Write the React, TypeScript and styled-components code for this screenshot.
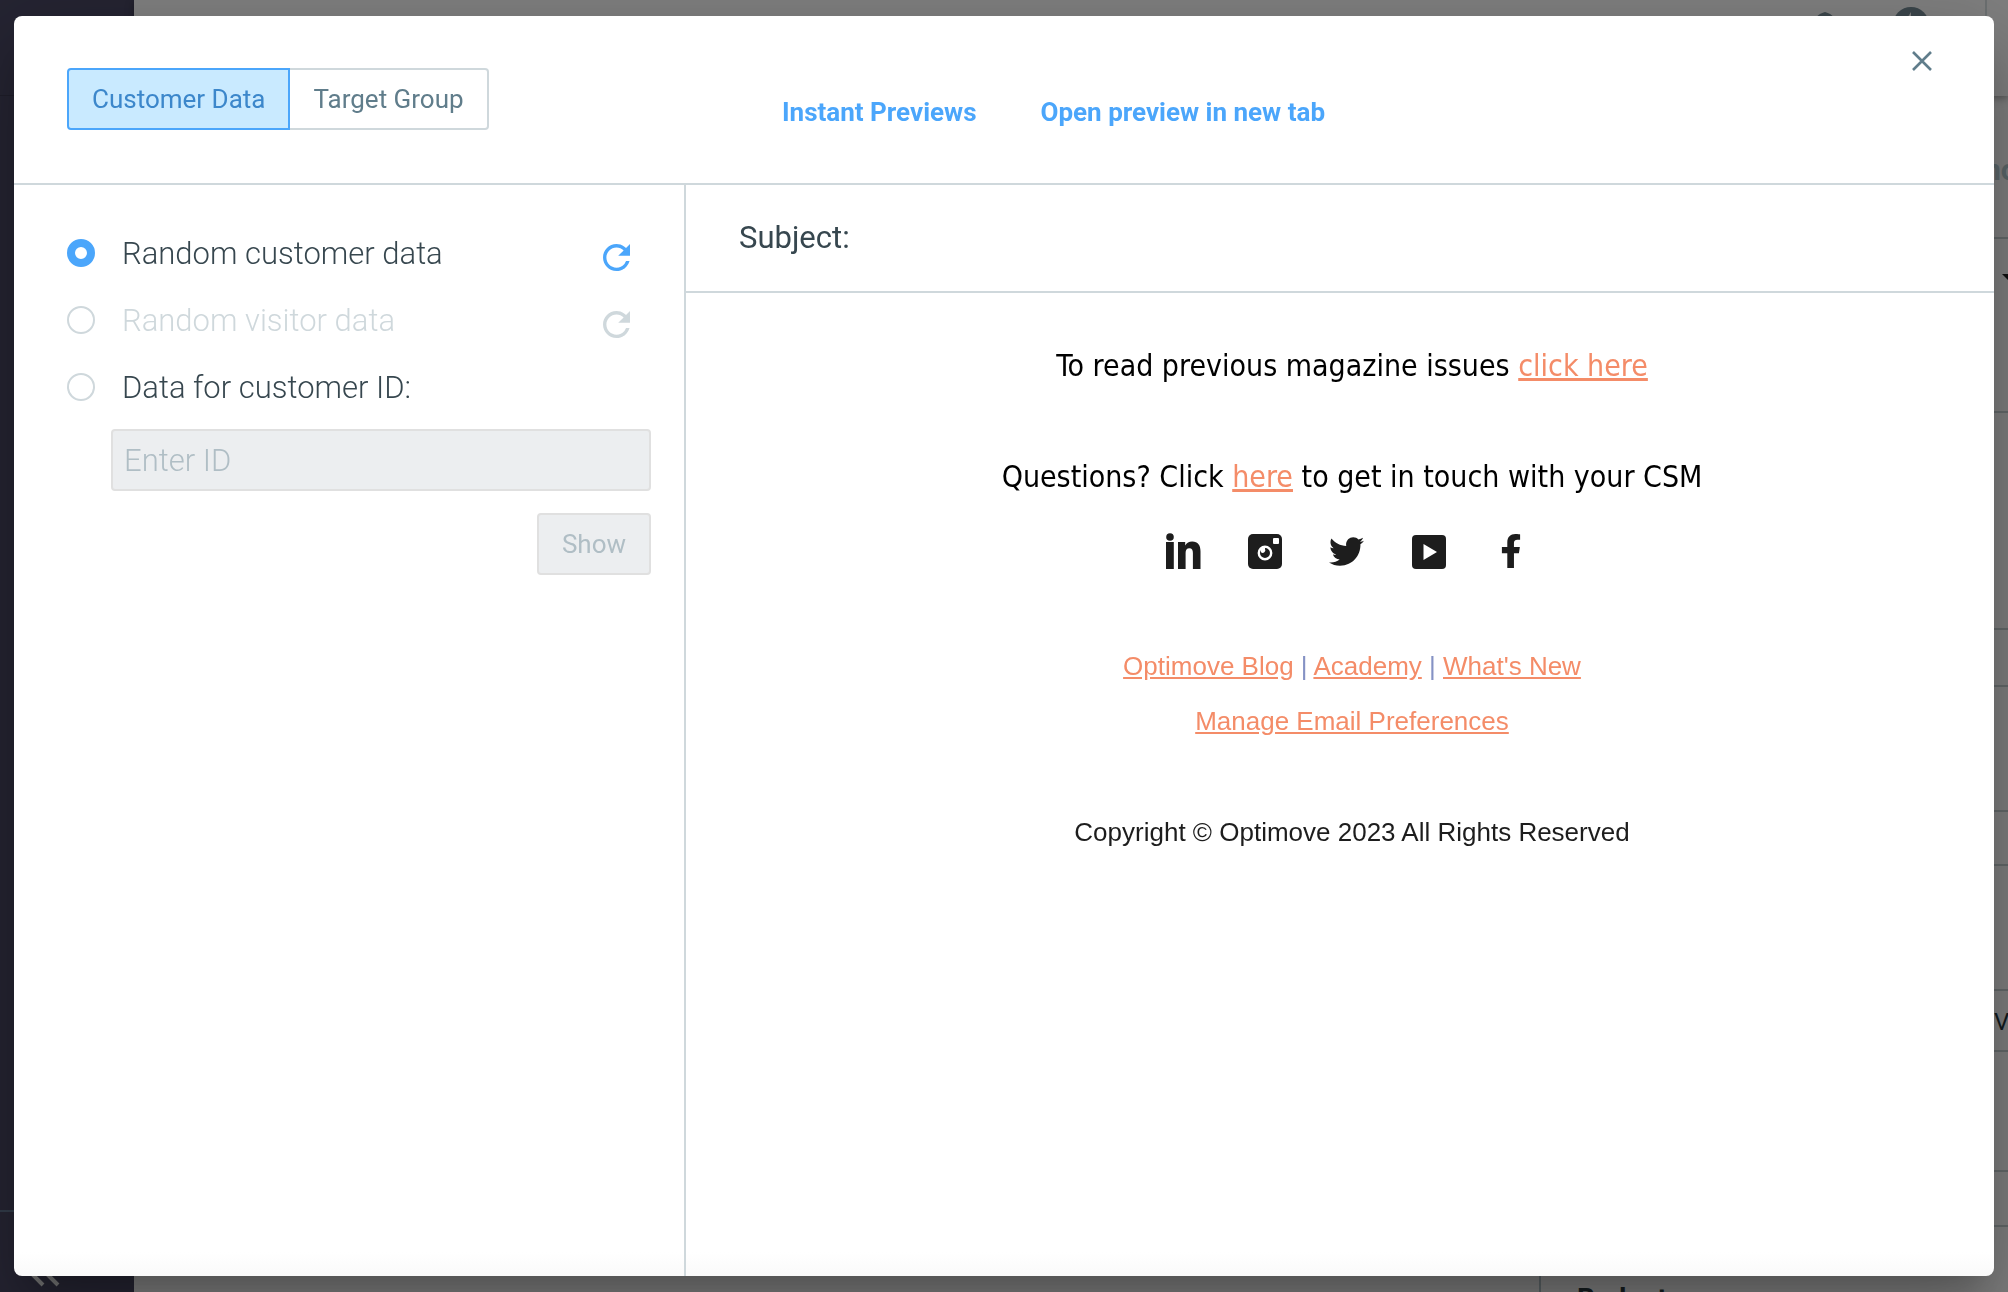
import React, { useState } from "react";
import styled, { createGlobalStyle } from "styled-components";
import { FaTwitter, FaFacebookF } from "react-icons/fa";

const GlobalStyle = createGlobalStyle`
  *, *::before, *::after { box-sizing: border-box; }
  body { margin: 0; font-family: Roboto, "Liberation Sans", sans-serif; color: #37474f; }
  button, input { font-family: inherit; }
`;

const line = "#cfd8dc";
const blue = "#4ba6fb";
const coral = "#f48c68";

/* Dimmed application behind the dialog */

const Backdrop = styled.div`
  display: flex;
  height: 100vh;
  overflow: hidden;
  background: #7f7f7f;
`;

const AppNav = styled.nav`
  flex: none;
  width: 134px;
  display: flex;
  flex-direction: column;
  background: #252432;
`;

const NavBrand = styled.div`
  height: 96px;
  border-bottom: 1px solid #1f1e2a;
`;

const NavFooter = styled.div`
  height: 82px;
  margin-top: auto;
  padding: 52px 0 0 30px;
  border-top: 2px solid #323c4a;
`;

const AppMain = styled.div`
  flex: 1;
  min-width: 0;
  display: flex;
  flex-direction: column;
`;

const TopBar = styled.div`
  flex: none;
  height: 96px;
  display: flex;
  justify-content: flex-end;
  align-items: flex-start;
  box-shadow: 0 2px 8px rgba(0, 0, 0, 0.35);
`;

const TopIcons = styled.div`
  display: flex;
  gap: 50px;
  padding: 7px 56px 0 0;
`;

const TopEdge = styled.div`
  width: 23px;
  height: 100%;
  border-left: 2px solid #6c7071;
`;

const SettingsPanel = styled.aside`
  align-self: flex-end;
  width: 469px;
  border-left: 2px solid #5b6366;
`;

const SettingsRow = styled.div<{ $height: number }>`
  height: ${(p) => p.$height}px;
  display: flex;
  align-items: center;
  justify-content: flex-end;
  border-bottom: 2px solid #64696a;
`;

const RowTitle = styled.div`
  width: 24px;
  padding-top: 6px;
  font-size: 30px;
  font-weight: 700;
  color: #5b6669;
`;

const RowValue = styled.div`
  width: 14px;
  padding-top: 2px;
  font-size: 24px;
  color: #111a1e;
`;

const SectionTitle = styled.div`
  padding: 56px 0 0 36px;
  font-size: 28px;
  line-height: 32px;
  font-weight: 700;
  color: #151d20;
`;

/* Dialog */

const Overlay = styled.div`
  position: fixed;
  inset: 0;
  display: flex;
  padding: 16px 14px;
`;

const Dialog = styled.section`
  flex: 1;
  display: flex;
  flex-direction: column;
  border-radius: 8px;
  overflow: hidden;
  background: linear-gradient(to top, #fafafa 0, #ffffff 24px);
  box-shadow: 0 22px 30px -14px rgba(0, 0, 0, 0.2),
    0 48px 76px 6px rgba(0, 0, 0, 0.14), 0 18px 92px 16px rgba(0, 0, 0, 0.12);
`;

const Header = styled.header`
  display: flex;
  align-items: flex-start;
  height: 169px;
  border-bottom: 2px solid ${line};
`;

const Tabs = styled.div`
  flex: none;
  width: 672px;
  display: flex;
  padding: 52px 0 0 53px;
`;

const Tab = styled.button<{ $active?: boolean }>`
  height: 62px;
  padding: 0 23px;
  font-size: 26px;
  color: ${(p) => (p.$active ? "#3c87cb" : "#607d8b")};
  background: ${(p) => (p.$active ? "#c9eaff" : "#ffffff")};
  border: 2px solid ${(p) => (p.$active ? blue : line)};

  &:first-child {
    border-radius: 4px 0 0 4px;
    ${(p) => !p.$active && "border-right: 0;"}
  }
  &:last-child {
    border-radius: 0 4px 4px 0;
    ${(p) => !p.$active && "border-left: 0;"}
  }
`;

const HeaderLinks = styled.nav`
  flex: 1;
  display: flex;
  gap: 64px;
  padding: 80px 0 0 96px;
`;

const HeaderLink = styled.a`
  font-size: 26px;
  line-height: 32px;
  font-weight: 700;
  color: ${blue};
  text-decoration: none;
`;

const CloseButton = styled.button`
  display: flex;
  margin: 27px 54px 0 0;
  padding: 8px;
  border: 0;
  background: none;
`;

const Body = styled.div`
  flex: 1;
  display: flex;
`;

const Sources = styled.form`
  flex: none;
  width: 672px;
  padding: 43px 33px 0 53px;
  border-right: 2px solid ${line};
`;

const SourceRow = styled.div`
  display: flex;
  justify-content: space-between;
  height: 67px;
  padding-right: 21px;
`;

const SourceLabel = styled.label<{ $muted?: boolean }>`
  display: flex;
  align-items: center;
  gap: 27px;
  height: 50px;
  font-size: 31px;
  font-weight: 300;
  color: ${(p) => (p.$muted ? line : "#37474f")};
`;

const Radio = styled.input`
  appearance: none;
  width: 28px;
  height: 28px;
  margin: 0;
  border: 2px solid ${line};
  border-radius: 50%;
  background: #ffffff;

  &:checked {
    border: 8px solid ${blue};
  }
`;

const RefreshButton = styled.button`
  display: flex;
  align-self: flex-start;
  margin-top: 16px;
  padding: 0;
  border: 0;
  background: none;
  color: ${blue};

  &:disabled {
    color: ${line};
  }
`;

const IdEntry = styled.div`
  display: flex;
  flex-direction: column;
  align-items: flex-end;
  gap: 22px;
  padding-left: 44px;
`;

const IdInput = styled.input`
  width: 100%;
  height: 62px;
  padding: 0 11px;
  font-size: 31px;
  font-weight: 300;
  border: 2px solid #e0e0e0;
  border-radius: 4px;
  background: #eceef0;

  &::placeholder {
    color: #b0bec5;
    opacity: 1;
  }
`;

const ShowButton = styled.button`
  height: 62px;
  padding: 0 23px;
  font-size: 26px;
  color: #b0bec5;
  border: 2px solid #e0e0e0;
  border-radius: 4px;
  background: #eceef0;
`;

const Preview = styled.main`
  flex: 1;
  min-width: 0;
`;

const Subject = styled.div`
  height: 108px;
  padding: 33px 53px 0;
  font-size: 31px;
  line-height: 40px;
  border-bottom: 2px solid ${line};
`;

const Email = styled.article`
  display: flex;
  flex-direction: column;
  align-items: center;
  padding: 45px 0 0 24px;
`;

const Lead = styled.p`
  margin: 0;
  padding-bottom: 55px;
  font-family: "DejaVu Sans Condensed", "Noto Sans", sans-serif;
  font-size: 30px;
  line-height: 56px;
  color: #000000;

  & + & {
    padding-bottom: 0;
  }
`;

const TextLink = styled.a`
  color: ${coral};
  text-decoration: underline;
`;

const Social = styled.div`
  display: flex;
  padding: 28px 11px 70px 0;
`;

const SocialLink = styled.a`
  display: flex;
  justify-content: center;
  align-items: center;
  width: 82px;
  height: 36px;
  color: #1d1d1d;
`;

const FooterLine = styled.p<{ $dark?: boolean }>`
  margin: 0;
  padding-top: ${(p) => (p.$dark ? 56 : 0)}px;
  font-family: "Liberation Sans", Arial, sans-serif;
  font-size: 26px;
  line-height: 55px;
  color: ${(p) => (p.$dark ? "#1d1d1d" : "#8592c4")};
`;

const RefreshIcon = () => (
  <svg width="27" height="27" viewBox="4 4 16 16" fill="currentColor" aria-hidden="true">
    <path d="M17.65 6.35A7.958 7.958 0 0 0 12 4c-4.42 0-7.99 3.58-7.99 8s3.57 8 7.99 8c3.73 0 6.84-2.55 7.73-6h-2.08A5.99 5.99 0 0 1 12 18c-3.31 0-6-2.69-6-6s2.69-6 6-6c1.66 0 3.14.69 4.22 1.78L13 11h7V4l-2.35 2.35z" />
  </svg>
);

const InstagramIcon = () => (
  <svg width="36" height="36" viewBox="0 0 36 36" aria-hidden="true">
    <rect x="1" y="1" width="34" height="35" rx="5" fill="#1d1d1d" />
    <rect x="26" y="5" width="6" height="6" rx="1" fill="#fff" />
    <circle cx="18" cy="20" r="6.2" fill="none" stroke="#fff" strokeWidth="2.4" />
    <path d="M14 19.200a2.600 2.600 0 0 0 4-3.200V13l-4.500 2z" fill="#fff" />
  </svg>
);

const YoutubeIcon = () => (
  <svg width="36" height="36" viewBox="0 0 36 36" aria-hidden="true">
    <rect x="1" y="2" width="34" height="34" rx="4" fill="#1d1d1d" />
    <path d="M12.500 11v16l13.500-8z" fill="#fff" />
  </svg>
);

const LinkedinMark = () => (
  <svg width="36" height="36" viewBox="0 0 36 36" fill="currentColor" aria-hidden="true">
    <circle cx="5" cy="4" r="3.8" />
    <path d="M1 9h7.8v27H1zM13 9h7.2v3.4C21.600 10 24 8.600 27.200 8.600 33 8.600 35.500 12.300 35.500 18.500V36h-7.600V20c0-3-1-4.800-3.500-4.800-2.700 0-3.800 1.900-3.800 4.800v16H13z" />
  </svg>
);

const sources = [
  { id: "customer", label: "Random customer data", refresh: true, disabled: false },
  { id: "visitor", label: "Random visitor data", refresh: true, disabled: true },
  { id: "id", label: "Data for customer ID:", refresh: false, disabled: false },
];

const settingsRows = [217, 57, 125, 54, 125, 61, 120, 55];

export default function App() {
  const [source, setSource] = useState("customer");
  return (
    <>
      <GlobalStyle />
      <Backdrop aria-hidden="true">
        <AppNav>
          <NavBrand />
          <NavFooter>
            <svg width="32" height="24" viewBox="0 0 32 24" fill="none" stroke="#777" strokeWidth="4">
              <path d="M14 1L3 11l11 11M29 1L18 11l11 11" transform="translate(-10 0)" opacity="0" />
              <path d="M1 10l12 12M16 10l12 12" transform="translate(0 -1)" />
            </svg>
          </NavFooter>
        </AppNav>
        <AppMain>
          <TopBar>
            <TopIcons>
              <svg width="36" height="36" viewBox="0 0 36 36" fill="#3b464b">
                <path d="M18 5c8 2 11 7 11 13v12H7V18C7 12 10 7 18 5z" />
              </svg>
              <svg width="36" height="36" viewBox="0 0 36 36" fill="#3b464b">
                <circle cx="18" cy="18" r="18" />
                <path d="M18 5v8h-5z" fill="#7f7f7f" />
              </svg>
            </TopIcons>
            <TopEdge />
          </TopBar>
          <SettingsPanel>
            <SettingsRow $height={143}>
              <RowTitle>no</RowTitle>
            </SettingsRow>
            <SettingsRow $height={174}>
              <svg width="6" height="102" viewBox="0 0 6 102">
                <path d="M0 0h12l-6 6z" fill="#111" />
              </svg>
            </SettingsRow>
            {settingsRows.map((height, i) => (
              <SettingsRow key={i} $height={height}>
                {i === 5 && <RowValue>V</RowValue>}
              </SettingsRow>
            ))}
            <SectionTitle>Budget</SectionTitle>
          </SettingsPanel>
        </AppMain>
      </Backdrop>

      <Overlay>
        <Dialog role="dialog" aria-label="Preview">
          <Header>
            <Tabs>
              <Tab type="button" $active>Customer Data</Tab>
              <Tab type="button">Target Group</Tab>
            </Tabs>
            <HeaderLinks>
              <HeaderLink href="#instant">Instant Previews</HeaderLink>
              <HeaderLink href="#new-tab">Open preview in new tab</HeaderLink>
            </HeaderLinks>
            <CloseButton type="button" aria-label="Close">
              <svg width="20" height="20" viewBox="0 0 20 20" stroke="#607d8b" strokeWidth="2.6">
                <path d="M1 1l18 18M19 1L1 19" />
              </svg>
            </CloseButton>
          </Header>
          <Body>
            <Sources>
              {sources.map((s) => (
                <SourceRow key={s.id}>
                  <SourceLabel $muted={s.disabled}>
                    <Radio
                      type="radio"
                      name="source"
                      checked={source === s.id}
                      disabled={s.disabled}
                      onChange={() => setSource(s.id)}
                    />
                    {s.label}
                  </SourceLabel>
                  {s.refresh && (
                    <RefreshButton type="button" disabled={s.disabled} aria-label={"Refresh " + s.label}>
                      <RefreshIcon />
                    </RefreshButton>
                  )}
                </SourceRow>
              ))}
              <IdEntry>
                <IdInput placeholder="Enter ID" aria-label="Customer ID" disabled={source !== "id"} />
                <ShowButton type="button" disabled={source !== "id"}>Show</ShowButton>
              </IdEntry>
            </Sources>
            <Preview>
              <Subject>Subject:</Subject>
              <Email>
                <Lead>
                  To read previous magazine issues <TextLink href="#issues">click here</TextLink>
                </Lead>
                <Lead>
                  Questions? Click <TextLink href="#csm">here</TextLink> to get in touch with your CSM
                </Lead>
                <Social>
                  <SocialLink href="#linkedin" aria-label="LinkedIn"><LinkedinMark /></SocialLink>
                  <SocialLink href="#instagram" aria-label="Instagram"><InstagramIcon /></SocialLink>
                  <SocialLink href="#twitter" aria-label="Twitter"><FaTwitter size={35} /></SocialLink>
                  <SocialLink href="#youtube" aria-label="YouTube"><YoutubeIcon /></SocialLink>
                  <SocialLink href="#facebook" aria-label="Facebook"><FaFacebookF size={34} /></SocialLink>
                </Social>
                <FooterLine>
                  <TextLink href="#blog">Optimove Blog</TextLink> | <TextLink href="#academy">Academy</TextLink> |{" "}
                  <TextLink href="#new">What's New</TextLink>
                </FooterLine>
                <FooterLine>
                  <TextLink href="#preferences">Manage Email Preferences</TextLink>
                </FooterLine>
                <FooterLine $dark>Copyright © Optimove 2023 All Rights Reserved</FooterLine>
              </Email>
            </Preview>
          </Body>
        </Dialog>
      </Overlay>
    </>
  );
}
